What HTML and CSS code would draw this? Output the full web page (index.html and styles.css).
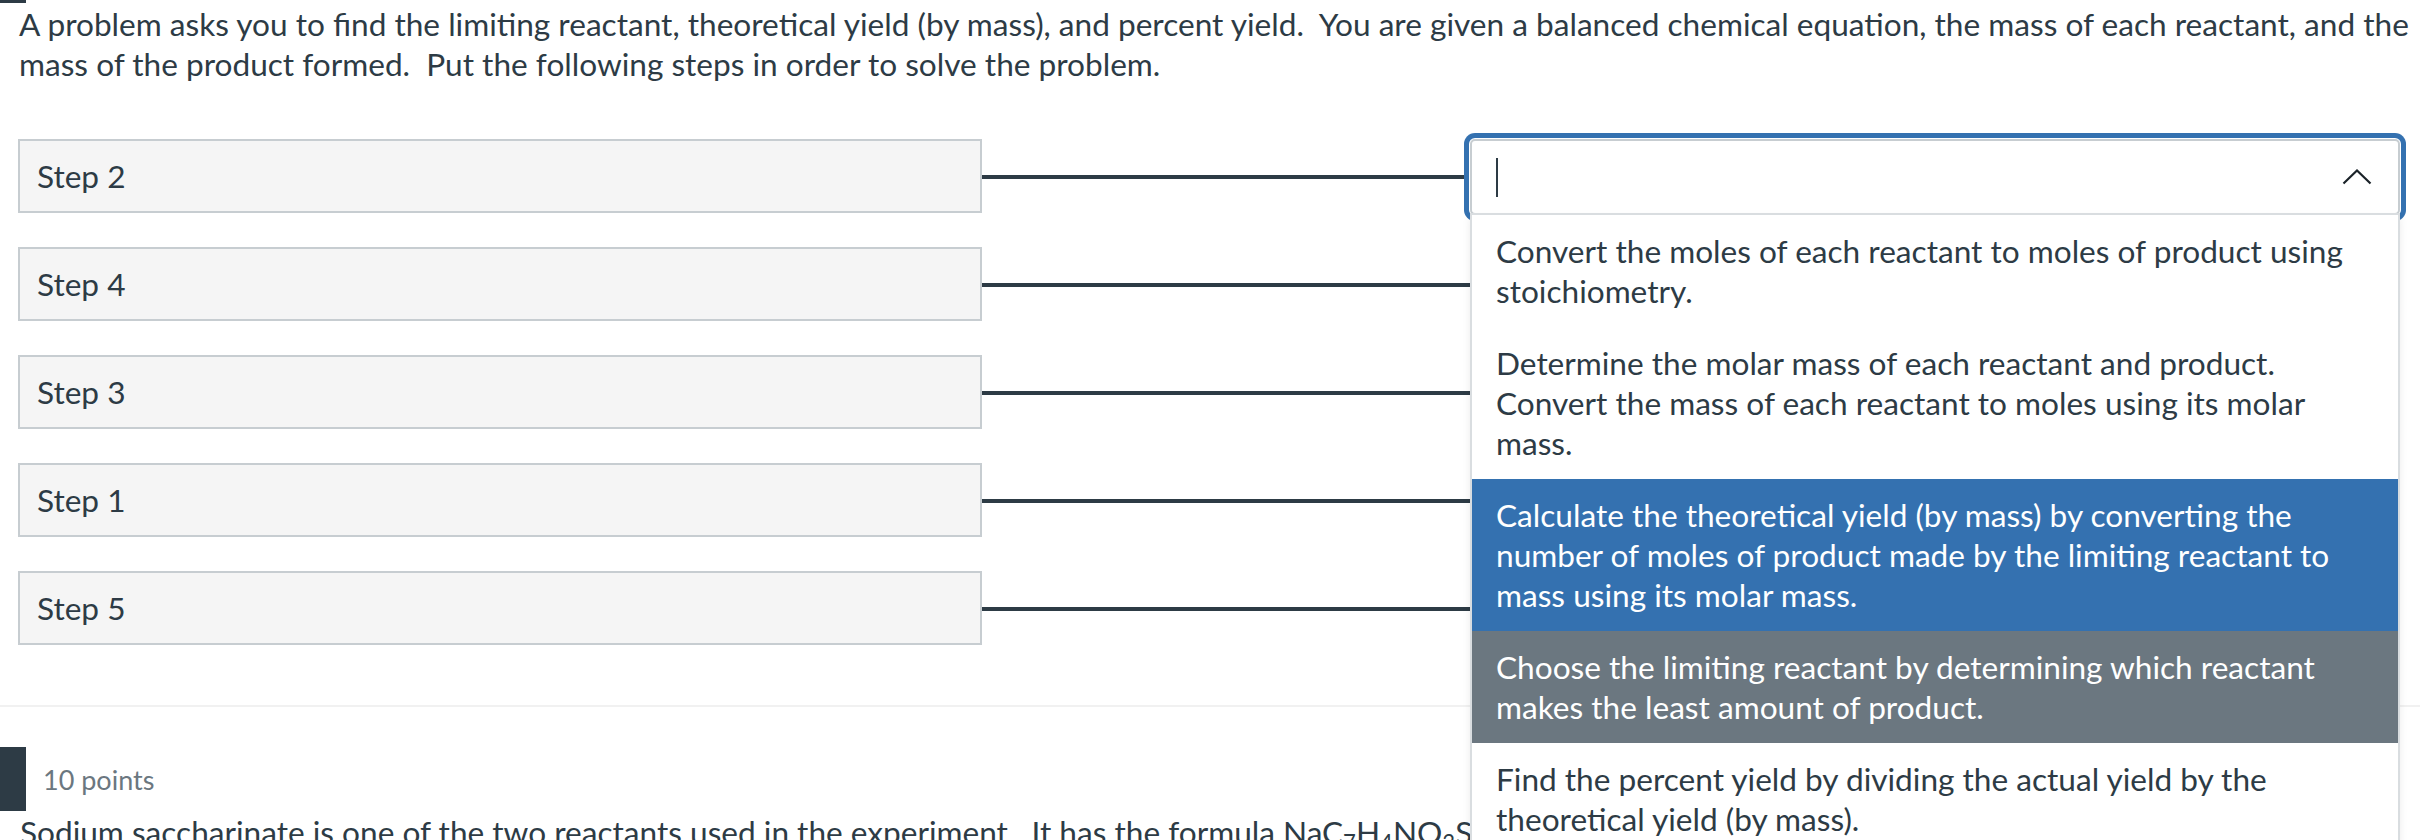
FILE: index.html
```html
<!DOCTYPE html>
<html lang="en">
<head>
  <meta charset="UTF-8">
  <meta name="viewport" content="width=device-width, initial-scale=1.0">
  <title>Quiz - Limiting Reactant</title>
  <link rel="stylesheet" href="styles.css">
</head>
<body>
  <div class="prev-marker"></div>

  <section class="question">
    <p class="prompt">A problem asks you to find the limiting reactant, theoretical yield (by mass), and percent yield.&nbsp; You are given a balanced chemical equation, the mass of each reactant, and the mass of the product formed.&nbsp; Put the following steps in order to solve the problem.</p>

    <div class="matches">
      <div class="match-row">
        <div class="step">Step 2</div>
        <div class="connector"></div>
        <div class="select is-open">
          <span class="caret"></span>
          <svg class="chevron" width="30" height="16" viewBox="0 0 30 16">
            <polyline points="1.5,14.5 15,1.5 28.5,14.5" fill="none" stroke="#1b2329" stroke-width="2.2"/>
          </svg>

          <ul class="options">
            <li>Convert the moles of each reactant to moles of product using stoichiometry.</li>
            <li>Determine the molar mass of each reactant and product.&nbsp; Convert the mass of each reactant to moles using its molar mass.</li>
            <li class="active">Calculate the theoretical yield (by mass) by converting the number of moles of product made by the limiting reactant to mass using its molar mass.</li>
            <li class="hover">Choose the limiting reactant by determining which reactant makes the least amount of product.</li>
            <li>Find the percent yield by dividing the actual yield by the theoretical yield (by mass).</li>
          </ul>
        </div>
      </div>

      <div class="match-row">
        <div class="step">Step 4</div>
        <div class="connector"></div>
        <div class="select"></div>
      </div>

      <div class="match-row">
        <div class="step">Step 3</div>
        <div class="connector"></div>
        <div class="select"></div>
      </div>

      <div class="match-row">
        <div class="step">Step 1</div>
        <div class="connector"></div>
        <div class="select"></div>
      </div>

      <div class="match-row">
        <div class="step">Step 5</div>
        <div class="connector"></div>
        <div class="select"></div>
      </div>
    </div>
  </section>

  <hr class="divider">

  <section class="question next">
    <div class="q-header">
      <span class="q-marker"></span>
      <span class="points">10 points</span>
    </div>
    <p class="prompt">Sodium saccharinate is one of the two reactants used in the experiment.&nbsp; It has the formula NaC<sub>7</sub>H<sub>4</sub>NO<sub>3</sub>S</p>
  </section>
</body>
</html>
```

FILE: styles.css
```css
html, body {
  overflow: hidden;
}

body {
  margin: 0;
  font-family: Lato, "Open Sans", sans-serif;
  color: #2d3b45;
  background: #fff;
}

.prev-marker {
  width: 26px;
  height: 3px;
  background: #2d3b45;
}

.prompt {
  margin: 1px 0 0;
  padding: 0 3px 0 19px;
  font-size: 31.6px;
  line-height: 40px;
}

.matches {
  margin-top: 55px;
  padding: 0 20px 0 18px;
}

.match-row {
  display: flex;
  align-items: flex-start;
  margin-bottom: 32px;
}

.step {
  box-sizing: border-box;
  width: 964px;
  height: 74px;
  display: flex;
  align-items: center;
  padding-left: 17px;
  background: #f5f5f5;
  border: 2px solid #c7cdd1;
  font-size: 31.6px;
}

.connector {
  flex: 1;
  height: 4px;
  margin-top: 36px;
  background: #2d3b45;
}

.select {
  position: relative;
  box-sizing: border-box;
  width: 930px;
  height: 76px;
  display: flex;
  align-items: center;
  justify-content: space-between;
  padding: 0 26px 0 24px;
  background: #fff;
  border: 2px solid #c7cdd1;
  border-radius: 5px;
}

.select.is-open {
  box-shadow: 0 0 0 1px #fff, 0 0 0 6px #3471b0;
}

.caret {
  width: 2px;
  height: 39px;
  background: #2d3b45;
}

.options {
  position: absolute;
  top: 100%;
  left: -2px;
  right: -2px;
  z-index: 10;
  margin: 0;
  padding: 0;
  list-style: none;
  background: #fff;
  border: 2px solid #d9dde0;
  box-shadow: 0 4px 8px rgba(0, 0, 0, 0.08);
}

.options li {
  padding: 16px 24px;
  font-size: 31.6px;
  line-height: 40px;
}

.options li.active {
  background: #3471b0;
  color: #fff;
}

.options li.hover {
  background: #6b7780;
  color: #fff;
}

.divider {
  margin: 58px 0 0;
  border: none;
  height: 2px;
  background: #f1f1f1;
}

.q-header {
  display: flex;
  align-items: center;
  gap: 17px;
  margin-top: 40px;
}

.q-marker {
  width: 26px;
  height: 64px;
  background: #2d3b45;
}

.points {
  font-size: 27px;
  color: #6b7780;
}

.next .prompt {
  margin-top: 1px;
  padding-left: 20px;
}

sub {
  font-size: 0.7em;
  line-height: 0;
}
```
